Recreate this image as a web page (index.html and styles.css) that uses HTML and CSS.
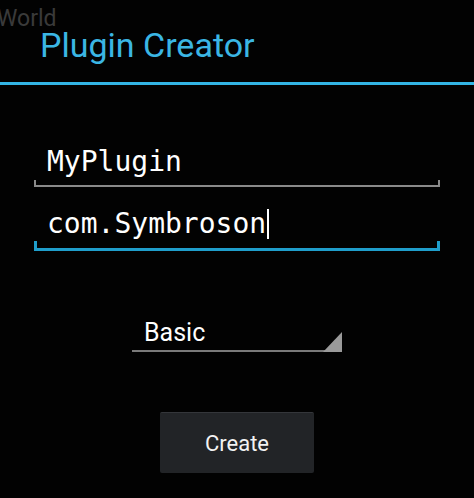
FILE: index.html
```html
<!DOCTYPE html>
<html>
<head>
<meta charset="utf-8">
<link rel="stylesheet" href="styles.css">
</head>
<body>
<div class="screen">
  <div class="behind">World</div>
  <header class="bar">
    <h1 class="title">Plugin Creator</h1>
  </header>
  <main class="form">
    <div class="field">
      <span class="value">MyPlugin</span>
    </div>
    <div class="field focused">
      <span class="value">com.Symbroson</span><span class="cursor"></span>
    </div>
    <div class="spinner-row">
      <div class="spinner">
        <span class="spinner-text">Basic</span>
        <span class="spinner-arrow"></span>
      </div>
    </div>
    <div class="button-row">
      <button class="btn">Create</button>
    </div>
  </main>
</div>
</body>
</html>
```
FILE: styles.css
```css
html, body {
  margin: 0;
  padding: 0;
  background: #000;
}
.screen {
  width: 474px;
  height: 498px;
  background: #020202;
  position: relative;
  overflow: hidden;
  font-family: Roboto, "Noto Sans", sans-serif;
}
.behind {
  position: absolute;
  left: -3px;
  top: 5px;
  font-size: 23px;
  color: #3a3a3a;
  line-height: 28px;
}
.bar {
  height: 82px;
  border-bottom: 3px solid #33b5e5;
  display: flex;
  align-items: flex-start;
  padding-left: 40px;
  box-sizing: content-box;
}
.title {
  margin: 0;
  margin-top: 24px;
  font-weight: 400;
  font-size: 34px;
  line-height: 42px;
  color: #3bb6e4;
}
.form {
  display: flex;
  flex-direction: column;
  padding: 0 34px;
}
.field {
  position: relative;
  height: 47px;
  display: flex;
  align-items: center;
  padding-left: 13px;
  border-bottom: 2px solid #8a8a8a;
  font-family: "DejaVu Sans Mono", monospace;
  font-size: 28px;
  color: #fff;
}
.field::before, .field::after {
  content: "";
  position: absolute;
  bottom: 0;
  width: 2px;
  height: 5px;
  background: #8a8a8a;
}
.field::before { left: 0; }
.field::after { right: 0; }
.field:first-child { margin-top: 53px; }
.field.focused {
  margin-top: 12px;
  height: 49px;
  border-bottom: 3px solid #1f9ecb;
}
.field.focused::before, .field.focused::after {
  background: #1f9ecb;
  width: 3px;
  height: 7px;
}
.cursor {
  display: inline-block;
  width: 2px;
  height: 30px;
  background: #fff;
  margin-left: 1px;
}
.spinner-row {
  display: flex;
  justify-content: flex-start;
  padding-left: 98px;
  margin-top: 63px;
}
.spinner {
  position: relative;
  width: 210px;
  height: 36px;
  border-bottom: 2px solid #7a7a7a;
  display: flex;
  align-items: center;
}
.spinner-text {
  color: #fff;
  font-size: 25px;
  padding-left: 12px;
}
.spinner-arrow {
  position: absolute;
  right: 0;
  bottom: -2px;
  width: 0;
  height: 0;
  border-left: 19px solid transparent;
  border-bottom: 20px solid #9a9a9a;
}
.button-row {
  display: flex;
  justify-content: center;
  margin-top: 60px;
}
.btn {
  width: 154px;
  height: 61px;
  background: #222427;
  border: none;
  border-top: 1px solid #34363a;
  border-radius: 2px;
  color: #f2f2f2;
  font-family: Roboto, sans-serif;
  font-size: 22px;
  padding: 0;
}
```
